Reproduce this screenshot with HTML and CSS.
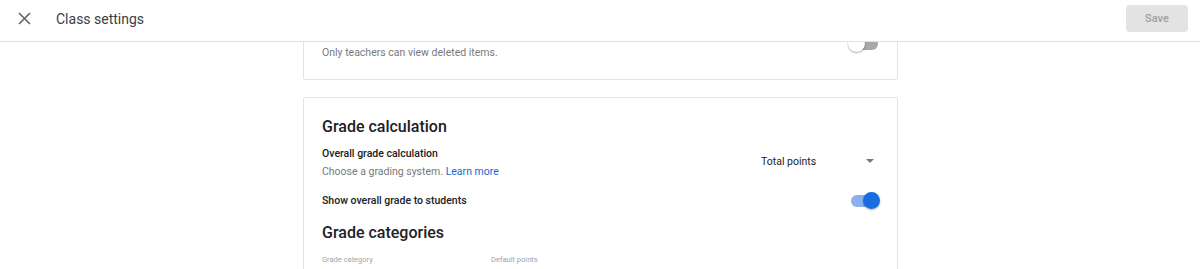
FILE: index.html
```html
<!DOCTYPE html>
<html lang="en">
<head>
<meta charset="utf-8">
<title>Class settings</title>
<link rel="stylesheet" href="styles.css">
</head>
<body>
<header class="topbar">
  <button class="close-btn" aria-label="Close">
    <svg width="13" height="13" viewBox="0 0 13 13"><path d="M1 1 L12 12 M12 1 L1 12" stroke="#5f6368" stroke-width="1.6" fill="none"/></svg>
  </button>
  <h1 class="title">Class settings</h1>
  <button class="save-btn">Save</button>
</header>
<main class="content">
  <section class="card card-first">
    <div class="setting-row">
      <div class="setting-text">
        <div class="setting-label">Show deleted items</div>
        <div class="setting-desc">Only teachers can view deleted items.</div>
      </div>
      <span class="toggle toggle-off toggle-top"><span class="thumb"></span></span>
    </div>
  </section>
  <section class="card card-grades">
    <h2 class="card-title">Grade calculation</h2>
    <div class="setting-row row-center row-calc">
      <div class="setting-text">
        <div class="setting-label">Overall grade calculation</div>
        <div class="setting-desc">Choose a grading system. <a class="link" href="#">Learn more</a></div>
      </div>
      <div class="dropdown">
        <span>Total points</span>
        <span class="caret"></span>
      </div>
    </div>
    <div class="setting-row row-center row-show">
      <div class="setting-label">Show overall grade to students</div>
      <span class="toggle toggle-on"><span class="thumb"></span></span>
    </div>
    <h2 class="card-title title-cats">Grade categories</h2>
    <div class="cat-head">
      <span class="cat-col">Grade category</span>
      <span class="cat-col">Default points</span>
    </div>
  </section>
</main>
</body>
</html>
```

FILE: styles.css
```css
* { box-sizing: border-box; }
html, body { margin: 0; padding: 0; background: #fff; }
body {
  font-family: Roboto, "Noto Sans", Arial, sans-serif;
  color: #202124;
  height: 269px;
  overflow: hidden;
}
.topbar {
  position: relative;
  z-index: 2;
  display: flex;
  align-items: center;
  height: 42px;
  border-bottom: 1px solid #e0e0e0;
  background: #fff;
  padding: 0 12px 0 18px;
}
.close-btn {
  border: 0;
  background: none;
  padding: 0;
  width: 13px;
  height: 13px;
  display: flex;
  margin-top: -4px;
}
.title {
  margin: 0 0 0 25px;
  font-size: 14px;
  font-weight: 400;
  color: #3c4043;
  margin-top: -4px;
}
.save-btn {
  margin-left: auto;
  width: 62px;
  height: 27px;
  border: 0;
  border-radius: 4px;
  background: #e3e3e3;
  color: #a0a0a0;
  font-family: inherit;
  font-size: 11px;
  font-weight: 500;
  margin-top: -4px;
}
.content {
  position: relative;
  z-index: 1;
  display: flex;
  flex-direction: column;
  align-items: center;
  gap: 17px;
}
.card {
  width: 595px;
  margin-left: 1px;
  border: 1px solid #e3e3e3;
  border-radius: 2px;
  padding: 0 18px;
  background: #fff;
}
.card-first {
  margin-top: -36px;
  padding-top: 18px;
  padding-bottom: 18px;
}
.setting-row {
  display: flex;
  justify-content: space-between;
  align-items: flex-start;
}
.row-center { align-items: center; }
.setting-label {
  font-size: 10.5px;
  font-weight: 500;
  line-height: 16px;
  color: #202124;
}
.setting-text { display: flex; flex-direction: column; gap: 4px; }
.setting-desc {
  font-size: 10.5px;
  line-height: 16px;
  color: #77797c;
}
.card-grades .setting-text { gap: 2px; }
.link { color: #1967d2; text-decoration: none; font-weight: 400; }
.toggle {
  position: relative;
  display: block;
  width: 26px;
  height: 12px;
  border-radius: 6px;
  margin-right: 2px;
}
.toggle .thumb {
  position: absolute;
  top: -3px;
  width: 17px;
  height: 17px;
  border-radius: 50%;
}
.toggle-off { background: #a8a8a8; margin-right: 1px; }
.toggle-off .thumb {
  left: -4px;
  background: #fff;
  box-shadow: 0 1px 2px rgba(0,0,0,0.3), 0 0 0 0.5px rgba(0,0,0,0.08);
}
.toggle-top { margin-top: 13px; }
.toggle-on { background: #8ab0ee; }
.toggle-on .thumb {
  right: -3px;
  background: #1a6ce0;
  box-shadow: 0 1px 2px rgba(0,0,0,0.3);
}
.card-grades { padding-top: 19px; height: 200px; }
.card-title {
  margin: 0;
  font-size: 16px;
  font-weight: 500;
  line-height: 20px;
  color: #202124;
}
.row-calc { margin-top: 9px; }
.dropdown {
  width: 118px;
  display: flex;
  align-items: center;
  justify-content: space-between;
  font-size: 10.5px;
  color: #202124;
  padding-right: 5px;
  margin-top: -4px;
}
.caret {
  width: 0;
  height: 0;
  border-left: 4px solid transparent;
  border-right: 4px solid transparent;
  border-top: 4px solid #7a7a7a;
}
.row-show { margin-top: 13px; }
.title-cats { margin-top: 14px; }
.cat-head {
  display: flex;
  margin-top: 11px;
  font-size: 7.5px;
  line-height: 12px;
  color: #a0a4a8;
}
.cat-col:first-child { width: 169px; }
```
